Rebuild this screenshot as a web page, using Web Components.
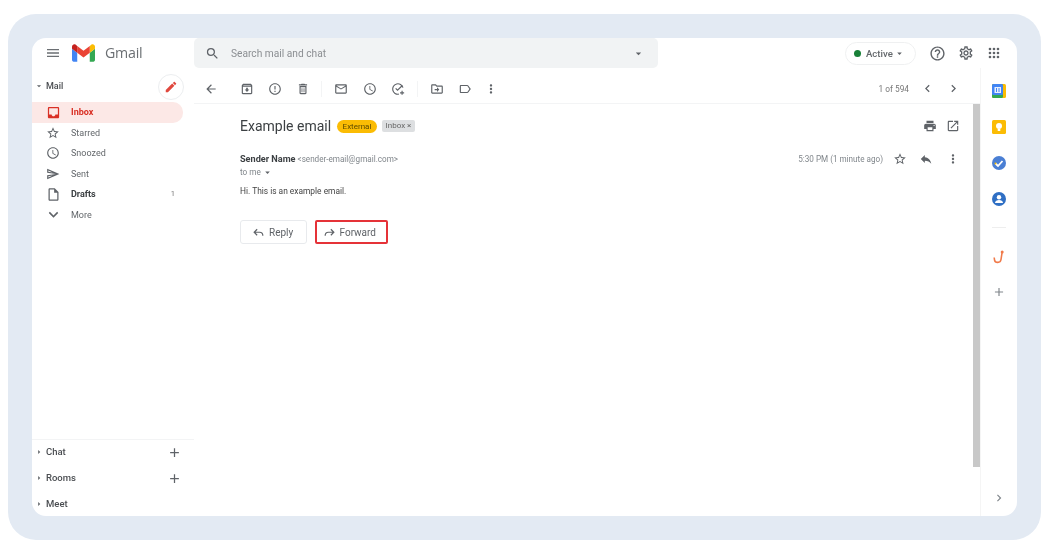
<!DOCTYPE html>
<html lang="en">
<head>
<meta charset="utf-8">
<title>Gmail</title>
<style>
html,body{margin:0;padding:0;background:#fff;}
body{font-family:Roboto,"Liberation Sans",sans-serif;width:1049px;height:548px;overflow:hidden;}
</style>
</head>
<body>
<gm-frame>
  <gm-topbar slot="top"></gm-topbar>
  <gm-sidebar slot="side"></gm-sidebar>
  <gm-main slot="main"></gm-main>
  <gm-rail slot="rail"></gm-rail>
</gm-frame>
<script>
const P={
menu:'M3 18h18v-2H3v2zm0-5h18v-2H3v2zm0-7v2h18V6H3z',
search:'M15.5 14h-.79l-.28-.27A6.471 6.471 0 0 0 16 9.5 6.5 6.5 0 1 0 9.5 16c1.61 0 3.09-.59 4.23-1.57l.27.28v.79l5 4.99L20.49 19l-4.99-5zm-6 0C7.01 14 5 11.99 5 9.5S7.01 5 9.5 5 14 7.01 14 9.5 11.99 14 9.5 14z',
help:'M11 18h2v-2h-2v2zm1-16C6.48 2 2 6.48 2 12s4.48 10 10 10 10-4.48 10-10S17.52 2 12 2zm0 18c-4.41 0-8-3.59-8-8s3.59-8 8-8 8 3.59 8 8-3.59 8-8 8zm0-14c-2.21 0-4 1.79-4 4h2c0-1.1.9-2 2-2s2 .9 2 2c0 2-3 1.75-3 5h2c0-2.25 3-2.5 3-5 0-2.21-1.79-4-4-4z',
gear:'M19.43 12.98c.04-.32.07-.64.07-.98 0-.34-.03-.66-.07-.98l2.11-1.65c.19-.15.24-.42.12-.64l-2-3.46c-.09-.16-.26-.25-.44-.25-.06 0-.12.01-.17.03l-2.49 1c-.52-.4-1.08-.73-1.69-.98l-.38-2.65C14.46 2.18 14.25 2 14 2h-4c-.25 0-.46.18-.49.42l-.38 2.65c-.61.25-1.17.59-1.69.98l-2.49-1c-.06-.02-.12-.03-.18-.03-.17 0-.34.09-.43.25l-2 3.46c-.13.22-.07.49.12.64l2.11 1.65c-.04.32-.07.65-.07.98 0 .33.03.66.07.98l-2.11 1.65c-.19.15-.24.42-.12.64l2 3.46c.09.16.26.25.44.25.06 0 .12-.01.17-.03l2.49-1c.52.4 1.08.73 1.69.98l.38 2.65c.03.24.24.42.49.42h4c.25 0 .46-.18.49-.42l.38-2.65c.61-.25 1.17-.59 1.69-.98l2.49 1c.06.02.12.03.18.03.17 0 .34-.09.43-.25l2-3.46c.12-.22.07-.49-.12-.64l-2.11-1.65zm-1.98-1.71c.04.31.05.52.05.73 0 .21-.02.43-.05.73l-.14 1.13.89.7 1.08.84-.7 1.21-1.27-.51-1.04-.42-.9.68c-.43.32-.84.56-1.25.73l-1.06.43-.16 1.13-.2 1.35h-1.4l-.19-1.35-.16-1.13-1.06-.43c-.43-.18-.83-.41-1.23-.71l-.91-.7-1.06.43-1.27.51-.7-1.21 1.08-.84.89-.7-.14-1.13c-.03-.31-.05-.54-.05-.74s.02-.43.05-.73l.14-1.13-.89-.7-1.08-.84.7-1.21 1.27.51 1.04.42.9-.68c.43-.32.84-.56 1.25-.73l1.06-.43.16-1.13.2-1.35h1.39l.19 1.35.16 1.13 1.06.43c.43.18.83.41 1.23.71l.91.7 1.06-.43 1.27-.51.7 1.21-1.07.85-.89.7.14 1.13zM12 8c-2.21 0-4 1.79-4 4s1.79 4 4 4 4-1.79 4-4-1.79-4-4-4zm0 6c-1.1 0-2-.9-2-2s.9-2 2-2 2 .9 2 2-.9 2-2 2z',
apps:'M6 4a2 2 0 1 0 0 4 2 2 0 0 0 0-4zm6 0a2 2 0 1 0 0 4 2 2 0 0 0 0-4zm6 0a2 2 0 1 0 0 4 2 2 0 0 0 0-4zM6 10a2 2 0 1 0 0 4 2 2 0 0 0 0-4zm6 0a2 2 0 1 0 0 4 2 2 0 0 0 0-4zm6 0a2 2 0 1 0 0 4 2 2 0 0 0 0-4zM6 16a2 2 0 1 0 0 4 2 2 0 0 0 0-4zm6 0a2 2 0 1 0 0 4 2 2 0 0 0 0-4zm6 0a2 2 0 1 0 0 4 2 2 0 0 0 0-4z',
back:'M20 11H7.83l5.59-5.59L12 4l-8 8 8 8 1.41-1.41L7.83 13H20v-2z',
archive:'M20.54 5.23l-1.39-1.68C18.88 3.21 18.47 3 18 3H6c-.47 0-.88.21-1.16.55L3.46 5.23C3.17 5.57 3 6.02 3 6.5V19c0 1.1.9 2 2 2h14c1.1 0 2-.9 2-2V6.5c0-.48-.17-.93-.46-1.27zM6.24 5h11.52l.83 1H5.42l.82-1zM5 19V8h14v11H5zm8.45-9h-2.9v3H8l4 4 4-4h-2.55z',
report:'M11 15h2v2h-2zm0-8h2v6h-2zm.99-5C6.47 2 2 6.48 2 12s4.47 10 9.99 10C17.52 22 22 17.52 22 12S17.52 2 11.99 2zM12 20c-4.42 0-8-3.58-8-8s3.58-8 8-8 8 3.58 8 8-3.58 8-8 8z',
trash:'M6 19c0 1.1.9 2 2 2h8c1.1 0 2-.9 2-2V7H6v12zM8 9h8v10H8V9zm1.5 1.5h1.5v7H9.500zm3.500 0h1.500v7H13zM15.500 4l-1-1h-5l-1 1H5v2h14V4z',
mail:'M20 4H4c-1.1 0-1.99.9-1.99 2L2 18c0 1.1.9 2 2 2h16c1.1 0 2-.9 2-2V6c0-1.1-.9-2-2-2zm0 14H4V8l8 5 8-5v10zm-8-7L4 6h16l-8 5z',
clock:'M11.99 2C6.47 2 2 6.48 2 12s4.47 10 9.99 10C17.52 22 22 17.52 22 12S17.52 2 11.99 2zM12 20c-4.42 0-8-3.58-8-8s3.58-8 8-8 8 3.58 8 8-3.58 8-8 8zm.5-13H11v6l5.25 3.15.75-1.23-4.5-2.67z',
move:'M20 6h-8l-2-2H4c-1.1 0-2 .9-2 2v12c0 1.1.9 2 2 2h16c1.1 0 2-.9 2-2V8c0-1.1-.9-2-2-2zm0 12H4V6h5.170l2 2H20v10zm-8-1l4-4-4-4v3H8v2h4v3z',
label:'M17.63 5.84C17.27 5.33 16.67 5 16 5L5 5.01C3.9 5.01 3 5.9 3 7v10c0 1.1.9 1.99 2 1.99L16 19c.67 0 1.27-.33 1.63-.84L22 12l-4.37-6.16zM16 17H5V7h11l3.550 5L16 17z',
more:'M12 8c1.1 0 2-.9 2-2s-.9-2-2-2-2 .9-2 2 .9 2 2 2zm0 2c-1.1 0-2 .9-2 2s.9 2 2 2 2-.9 2-2-.9-2-2-2zm0 6c-1.1 0-2 .9-2 2s.9 2 2 2 2-.9 2-2-.9-2-2-2z',
left:'M15.41 7.41L14 6l-6 6 6 6 1.41-1.41L10.83 12z',
right:'M10 6L8.59 7.41 13.17 12l-4.58 4.59L10 18l6-6z',
print:'M19 8H5c-1.66 0-3 1.34-3 3v6h4v4h12v-4h4v-6c0-1.66-1.34-3-3-3zm-3 11H8v-5h8v5zm3-7c-.55 0-1-.45-1-1s.45-1 1-1 1 .45 1 1-.45 1-1 1zm-1-9H6v4h12V3z',
open:'M19 19H5V5h7V3H5c-1.11 0-2 .9-2 2v14c0 1.1.89 2 2 2h14c1.1 0 2-.9 2-2v-7h-2v7zM14 3v2h3.59l-9.83 9.83 1.41 1.41L19 6.41V10h2V3h-7z',
star:'M22 9.24l-7.19-.62L12 2 9.19 8.63 2 9.24l5.46 4.73L5.82 21 12 17.27 18.18 21l-1.63-7.03L22 9.24zM12 15.4l-3.76 2.27 1-4.28-3.32-2.88 4.38-.38L12 6.1l1.71 4.04 4.38.38-3.32 2.88 1 4.28L12 15.4z',
reply:'M10 9V5l-7 7 7 7v-4.1c5 0 8.5 1.6 11 5.1-1-5-4-10-11-11z',
inbox:'M19 3H5c-1.1 0-2 .9-2 2v14c0 1.1.9 2 2 2h14c1.1 0 2-.9 2-2V5c0-1.1-.9-2-2-2zm0 12h-4c0 1.66-1.35 3-3 3s-3-1.34-3-3H5V5h14v10z',
send:'M4.01 6.03l7.51 3.22-7.52-1 .01-2.22m7.5 8.72L4 17.97v-2.22l7.51-1M2.01 3L2 10l15 2-15 2 .01 7L23 12 2.01 3z',
draft:'M14 2H6c-1.1 0-1.99.9-1.99 2L4 20c0 1.1.89 2 1.99 2H18c1.1 0 2-.9 2-2V8l-6-6zM6 20V4h7v5h5v11H6z',
expand:'M16.59 8.59L12 13.17 7.41 8.59 6 10l6 6 6-6z',
add:'M19 13h-6v6h-2v-6H5v-2h6V5h2v6h6v2z',
edit:'M3 17.25V21h3.75L17.81 9.94l-3.75-3.75L3 17.25zM20.71 7.04c.39-.39.39-1.02 0-1.41l-2.34-2.34c-.39-.39-1.02-.39-1.41 0l-1.83 1.83 3.75 3.75 1.83-1.83z',
caretd:'M7 10l5 5 5-5z',
caretr:'M10 7l5 5-5 5z'
};
const STROKE={
task:'<path d="M20.500 9.500A9 9 0 1 0 13.500 20.900" fill="none" stroke="currentColor" stroke-width="2"/><path d="M8 11l3.200 3.200L19.500 6" fill="none" stroke="currentColor" stroke-width="2"/><path d="M19 15v7M15.500 18.500h7" fill="none" stroke="currentColor" stroke-width="2"/>',
replyo:'<path d="M9.500 6L4 11.500 9.500 17M4.500 11.500H14c3.500 0 6 2.500 6 6.500" fill="none" stroke="currentColor" stroke-width="2.200"/>',
forwardo:'<path d="M14.500 6L20 11.500 14.500 17M19.500 11.500H10c-3.500 0-6 2.500-6 6.500" fill="none" stroke="currentColor" stroke-width="2.200"/>'
};
function def(name,css,html){
  customElements.define(name,class extends HTMLElement{
    constructor(){super();const r=this.attachShadow({mode:'open'});
      r.innerHTML='<style>'+css+'</style>'+(typeof html==='function'?html(this):html);}
  });
}
class GmIcon extends HTMLElement{
  connectedCallback(){
    if(this.shadowRoot)return;
    const n=this.getAttribute('name'),s=this.getAttribute('size')||12,c=this.getAttribute('color')||'#5f6368';
    const r=this.attachShadow({mode:'open'});
    const inner=STROKE[n]||`<path fill="currentColor" d="${P[n]}"/>`;
    r.innerHTML=`<style>:host{display:inline-flex;align-items:center;justify-content:center;flex:none;color:${c};width:var(--cell,${s}px);height:${s}px}svg{display:block;flex:none}</style><svg width="${s}" height="${s}" viewBox="0 0 24 24">${inner}</svg>`;
  }
}
customElements.define('gm-icon',GmIcon);

def('gm-frame',`
:host{display:block;box-sizing:border-box;width:1033px;height:526px;margin:14px 8px 8px;padding:24px;background:#e3eaf3;border-radius:28px;filter:blur(.6px)}
.app{width:985px;height:478px;background:#fff;border-radius:14px;overflow:hidden;display:grid;grid-template-columns:162px 786px 37px;grid-template-rows:30px 448px}
.t{grid-column:1/4}
`,`<div class="app"><div class="t"><slot name="top"></slot></div><slot name="side"></slot><slot name="main"></slot><slot name="rail"></slot></div>`);

def('gm-topbar',`
:host{display:flex;height:30px;align-items:center;color:#5f6368}
.brand{width:162px;display:flex;align-items:center;flex:none;height:30px}
.brand gm-icon{margin-left:13px}
.logo{margin-left:11px;display:block}
.word{margin-left:10px;font:400 14.200px/30px "Open Sans",Roboto,sans-serif;color:#6b6f73;letter-spacing:-.2px}
.search{width:464px;height:30px;flex:none;background:#f1f3f4;border-radius:5px;display:flex;align-items:center;box-sizing:border-box;padding:0 13px 0 11px}
.ph{margin-left:11px;padding-top:1px;font:400 10.200px/29px Roboto,sans-serif;color:#8b8e92;flex:1}
.chip{margin-left:187px;width:71px;height:23px;box-sizing:border-box;border:1px solid #eff0f1;border-radius:12px;display:flex;align-items:center;padding-left:8px;font:500 9.600px/21px Roboto,sans-serif;color:#63676b;flex:none}
.dot{width:7px;height:7px;border-radius:50%;background:#188038;margin-right:5px}
.ic{display:flex;align-items:center;margin-left:12.500px}
.ic gm-icon+gm-icon{margin-left:12px}
`,`<div class="brand"><gm-icon name="menu" size="16" color="#6b6f73"></gm-icon>
<svg class="logo" width="23" height="18" viewBox="52 42 88 66"><path fill="#4285f4" d="M58 108h14V74L52 59v43c0 3.320 2.690 6 6 6"/><path fill="#34a853" d="M120 108h14c3.320 0 6-2.690 6-6V59l-20 15"/><path fill="#fbbc04" d="M120 48v26l20-15v-8c0-7.420-8.470-11.650-14.400-7.200"/><path fill="#ea4335" d="M72 74V48l24 18 24-18v26L96 92"/><path fill="#c5221f" d="M52 51v8l20 15V48l-5.600-4.200c-5.940-4.450-14.400-.22-14.400 7.200"/></svg>
<span class="word">Gmail</span></div>
<div class="search"><gm-icon name="search" size="15"></gm-icon><span class="ph">Search mail and chat</span><gm-icon name="caretd" size="13"></gm-icon></div>
<div class="chip"><span class="dot"></span>Active<gm-icon name="caretd" size="11" style="margin-left:1px"></gm-icon></div>
<div class="ic"><gm-icon name="help" size="17"></gm-icon><gm-icon name="gear" size="16"></gm-icon><gm-icon name="apps" size="16"></gm-icon></div>`);

def('gm-nav',`
:host{display:flex;align-items:center;height:20.500px;width:151px;border-radius:0 10px 10px 0;font:400 9px/20.500px Roboto,sans-serif;color:#63676b;box-sizing:border-box;padding-left:13.500px;--cell:15px}
:host([active]){background:#fce8e6;color:#d93025;font-weight:700}
:host([bold]){font-weight:700;color:#3c4043}
.l{margin-left:10.500px;flex:1}
.n{font-weight:400;font-size:7.500px;color:#777;margin-right:8px}
`,el=>`<gm-icon name="${el.getAttribute('icon')}" size="${el.getAttribute('isize')||14}" color="${el.hasAttribute('active')?'#d93025':'#5f6368'}"></gm-icon><span class="l"><slot></slot></span><span class="n">${el.getAttribute('count')||''}</span>`);

def('gm-section',`
:host{display:flex;align-items:center;height:26px;font:500 9.500px/26px Roboto,sans-serif;color:#4a4d51;box-sizing:border-box;padding-left:2px}
.l{margin-left:2px;flex:1}
gm-icon{margin-right:12px}
`,el=>`<gm-icon name="caretr" size="10" style="margin-right:0"></gm-icon><span class="l"><slot></slot></span>${el.hasAttribute('plus')?'<gm-icon name="add" size="15"></gm-icon>':''}`);

def('gm-sidebar',`
:host{display:flex;flex-direction:column;height:448px;color:#5f6368}
.head{display:flex;align-items:center;height:33px;margin-top:1px;font:500 9px/31px Roboto,sans-serif;color:#4a4d51;box-sizing:border-box}
.head .t{margin-left:2px;flex:1;padding-top:2px}
.head gm-icon{padding-top:1px}
.compose{width:26px;height:26px;box-sizing:border-box;border:1px solid #eceef0;border-radius:50%;display:flex;align-items:center;justify-content:center;margin:3px 10px 0 0;background:#fff}
.compose gm-icon{padding-top:0}
.nav{display:flex;flex-direction:column}
.bottom{margin-top:auto;border-top:1px solid #f3f4f5;height:77px;box-sizing:border-box}
.bottom gm-section:first-child{margin-top:-1px}
`,`<div class="head"><gm-icon name="caretd" size="10" style="margin-left:2px"></gm-icon><span class="t">Mail</span><span class="compose"><gm-icon name="edit" size="14" color="#e0483e"></gm-icon></span></div>
<div class="nav">
<gm-nav icon="inbox" isize="15" active>Inbox</gm-nav>
<gm-nav icon="star">Starred</gm-nav>
<gm-nav icon="clock">Snoozed</gm-nav>
<gm-nav icon="send">Sent</gm-nav>
<gm-nav icon="draft" isize="15" bold count="1">Drafts</gm-nav>
<gm-nav icon="expand" isize="19">More</gm-nav>
</div>
<div class="bottom"><gm-section plus>Chat</gm-section><gm-section plus>Rooms</gm-section><gm-section>Meet</gm-section></div>`);

def('gm-toolbar',`
:host{display:flex;align-items:center;height:36px;box-sizing:border-box;border-bottom:1px solid #f3f4f5;padding:6px 14px 0 3px;--cell:28px}
.d{width:1px;height:16px;background:#f3f4f5;flex:none}
.p{margin-left:auto;font:400 8.300px/12px Roboto,sans-serif;color:#777;margin-right:5px}
`,`<gm-icon name="back" size="14"></gm-icon><gm-icon name="archive" size="14" style="margin-left:8px"></gm-icon><gm-icon name="report" size="14"></gm-icon><gm-icon name="trash" size="14"></gm-icon>
<span class="d" style="margin-left:4px"></span><gm-icon name="mail" size="14" style="margin-left:5px"></gm-icon><gm-icon name="clock" size="14" style="--cell:29px"></gm-icon><gm-icon name="task" size="14"></gm-icon>
<span class="d" style="margin-left:5px"></span><gm-icon name="move" size="14" style="margin-left:5px"></gm-icon><gm-icon name="label" size="14"></gm-icon><gm-icon name="more" size="14" style="--cell:24px"></gm-icon>
<span class="p">1 of 594</span><gm-icon name="left" size="15" style="--cell:26px"></gm-icon><gm-icon name="right" size="15" style="--cell:26px"></gm-icon>`);

def('gm-message',`
:host{display:block;flex:1;box-sizing:border-box;padding:0 0 0 46px;color:#3c4043}
.subj{display:flex;align-items:center;height:22px;margin-top:11px}
h1{margin:0;font:400 14px/22px Roboto,sans-serif;color:#3c4043;width:92px;white-space:nowrap}
.ext{margin-left:5px;width:40px;height:13px;border-radius:7px;background:#fbbc04;font:400 8px/13px Roboto,sans-serif;color:#5c4a00;text-align:center}
.inb{margin-left:5px;width:33px;height:12px;border-radius:2px;background:#dddfe1;font:400 8px/12px Roboto,sans-serif;color:#666;text-align:center;white-space:nowrap}
.acts{margin-left:auto;display:flex;--cell:23px;padding-right:9px}
.from{display:flex;align-items:center;height:14px;margin-top:15px;font:400 8.150px/14px Roboto,sans-serif;color:#80868b}
b{font:700 9.150px/14px Roboto,sans-serif;color:#3c4043;margin-right:2px}
.time{margin-left:auto;margin-right:3.500px}
.from .r{display:flex;--cell:26.500px;padding-right:7px}
.to{display:flex;align-items:center;height:12px;font:400 8.200px/12px Roboto,sans-serif;color:#80868b}
.msg{margin:6px 0 0;font:400 8.400px/14px Roboto,sans-serif;color:#444}
.btns{display:flex;margin-top:22px}
gm-btn+gm-btn{margin-left:8px}
`,`<div class="subj"><h1>Example email</h1><span class="ext">External</span><span class="inb">Inbox ×</span>
<span class="acts"><gm-icon name="print" size="14"></gm-icon><gm-icon name="open" size="14"></gm-icon></span></div>
<div class="from"><b>Sender Name</b><span>&lt;sender-email@gmail.com&gt;</span><span class="time">5:30 PM (1 minute ago)</span>
<span class="r"><gm-icon name="star" size="14"></gm-icon><gm-icon name="reply" size="14"></gm-icon><gm-icon name="more" size="14"></gm-icon></span></div>
<div class="to">to me<gm-icon name="caretd" size="11" style="margin-left:1px"></gm-icon></div>
<p class="msg">Hi. This is an example email.</p>
<div class="btns"><gm-btn icon="replyo" w="67">Reply</gm-btn><gm-btn icon="forwardo" w="73" hot>Forward</gm-btn></div>`);

def('gm-btn',`
:host{display:flex;align-items:center;height:24px;box-sizing:border-box;border:1px solid #e8eaed;border-radius:3px;font:400 10px/22px Roboto,sans-serif;color:#5f6368;padding-left:11px}
:host([hot]){border:2px solid #e53238;border-radius:2px;padding-left:6px}
span{margin-left:4px;padding-top:1px}
:host([hot]) span{margin-left:3.500px}
`,el=>{el.style.width=el.getAttribute('w')+'px';return `<gm-icon name="${el.getAttribute('icon')}" size="13"></gm-icon><span><slot></slot></span>`});

def('gm-main',`
:host{display:flex;flex-direction:column;height:448px}
.body{display:flex;flex:1}
.bar{width:7px;height:363px;background:#c8c8c8;flex:none}
`,`<gm-toolbar></gm-toolbar><div class="body"><gm-message></gm-message><div class="bar"></div></div>`);

def('gm-rail',`
:host{display:flex;flex-direction:column;align-items:center;height:448px;border-left:1px solid #f5f5f5;box-sizing:border-box;padding-top:16px}
svg{display:block;flex:none;width:14px;height:14px}
svg+svg{margin-top:22px}
.sep{width:14px;height:1px;background:#eee;margin:21px 0 22px;flex:none}
.sep+svg{margin-top:0}
.plus{margin-top:21px}
.end{margin-top:auto;margin-bottom:11px}
`,`<svg viewBox="0 0 14 14"><rect width="14" height="14" rx="1.500" fill="#fbbc04"/><rect width="11" height="14" rx="1.500" fill="#34a853"/><rect width="11" height="11" rx="1.500" fill="#4285f4"/><rect x="2.500" y="3" width="6.500" height="6" fill="#e8f0fe"/><rect x="4" y="4" width="1" height="4" fill="#4285f4"/><rect x="6.500" y="4" width="1" height="4" fill="#4285f4"/></svg>
<svg viewBox="0 0 14 14"><rect width="14" height="14" rx="1.500" fill="#fbbc04"/><circle cx="7" cy="6" r="3" fill="#fff"/><rect x="5.700" y="9" width="2.600" height="2" fill="#fff"/></svg>
<svg viewBox="0 0 14 14"><circle cx="7" cy="7" r="7" fill="#4a7fd4"/><path d="M3.500 7.500L6 10l4.500-5" fill="none" stroke="#fff" stroke-width="1.800"/><circle cx="3.500" cy="7.500" r="1" fill="#fbbc04"/></svg>
<svg viewBox="0 0 14 14"><circle cx="7" cy="7" r="7" fill="#2f6fc4"/><circle cx="7" cy="5.200" r="2.200" fill="#fff"/><path d="M3 11c0-2 2-3 4-3s4 1 4 3z" fill="#fff"/></svg>
<div class="sep"></div>
<svg viewBox="0 0 14 14"><path d="M10 3L9 9.500C8.500 13.300 3 13.300 2.500 9.800L2.200 7.500" fill="none" stroke="#f07a4a" stroke-width="1.600"/><circle cx="10.200" cy="2" r="1.500" fill="#f07a4a"/></svg>
<svg class="plus" viewBox="0 0 24 24"><path fill="#80868b" d="M19 13h-6v6h-2v-6H5v-2h6V5h2v6h6v2z"/></svg>
<svg class="end" viewBox="0 0 24 24"><path fill="#80868b" d="M10 6L8.590 7.410 13.170 12l-4.580 4.590L10 18l6-6z"/></svg>`);
</script>
</body>
</html>
